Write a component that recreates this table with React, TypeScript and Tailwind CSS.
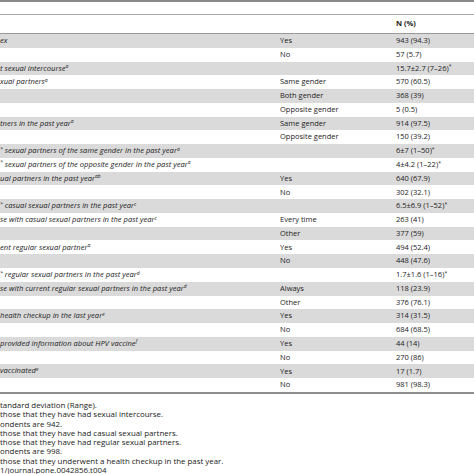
type Row = { label?: string; sup?: string; star?: boolean; cat?: string; val: string; valStar?: boolean };

const rows: Row[] = [
  { label: 'ex', cat: 'Yes', val: '943 (94.3)' },
  { cat: 'No', val: '57 (5.7)' },
  { label: 't sexual intercourse', sup: 'a', val: '15.7±2.7 (7–26)', valStar: true },
  { label: 'xual partners', sup: 'a', cat: 'Same gender', val: '570 (60.5)' },
  { cat: 'Both gender', val: '368 (39)' },
  { cat: 'Opposite gender', val: '5 (0.5)' },
  { label: 'tners in the past year', sup: 'a', cat: 'Same gender', val: '914 (97.5)' },
  { cat: 'Opposite gender', val: '150 (39.2)' },
  { label: ' sexual partners of the same gender in the past year', star: true, sup: 'a', val: '6±7 (1–50)', valStar: true },
  { label: ' sexual partners of the opposite gender in the past year', star: true, sup: 'a', val: '4±4.2 (1–22)', valStar: true },
  { label: 'ual partners in the past year', sup: 'ab', cat: 'Yes', val: '640 (67.9)' },
  { cat: 'No', val: '302 (32.1)' },
  { label: ' casual sexual partners in the past year', star: true, sup: 'c', val: '6.5±6.9 (1–52)', valStar: true },
  { label: 'se with casual sexual partners in the past year', sup: 'c', cat: 'Every time', val: '263 (41)' },
  { cat: 'Other', val: '377 (59)' },
  { label: 'ent regular sexual partner', sup: 'a', cat: 'Yes', val: '494 (52.4)' },
  { cat: 'No', val: '448 (47.6)' },
  { label: ' regular sexual partners in the past year', star: true, sup: 'd', val: '1.7±1.6 (1–16)', valStar: true },
  { label: 'se with current regular sexual partners in the past year', sup: 'd', cat: 'Always', val: '118 (23.9)' },
  { cat: 'Other', val: '376 (76.1)' },
  { label: 'health checkup in the last year', sup: 'e', cat: 'Yes', val: '314 (31.5)' },
  { cat: 'No', val: '684 (68.5)' },
  { label: 'provided information about HPV vaccine', sup: 'f', cat: 'Yes', val: '44 (14)' },
  { cat: 'No', val: '270 (86)' },
  { label: 'vaccinated', sup: 'e', cat: 'Yes', val: '17 (1.7)' },
  { cat: 'No', val: '981 (98.3)' },
]

const notes = [
  'tandard deviation (Range).',
  'those that they have had sexual intercourse.',
  'ondents are 942.',
  'those that they have had casual sexual partners.',
  'those that they have had regular sexual partners.',
  'ondents are 998.',
  'those that they underwent a health checkup in the past year.',
  '1/journal.pone.0042856.t004',
]

export default function App() {
  return (
    <div className="w-[474px] h-[474px] overflow-hidden bg-white text-[#222] text-[7.5px] leading-none" style={{ fontFamily: '"Open Sans", "Liberation Sans", sans-serif' }}>
      {/* Top rule */}
      <div className="h-[2px] bg-[#8a8a8a]" />
      <div className="h-[12px]" />
      <div className="h-px bg-[#a8a8a8]" />

      {/* Header */}
      <div className="flex h-[18px] items-center">
        <div className="w-[396px] shrink-0" />
        <div className="font-bold">N (%)</div>
      </div>
      <div className="h-px bg-[#9a9a9a]" />

      {/* Body */}
      <div>
        {rows.map((r, i) => (
          <div key={i} className={`flex h-[13.77px] items-center ${i % 2 === 0 ? 'bg-[#dadada]' : 'bg-white'}`}>
            <div className="w-[280px] shrink-0 whitespace-nowrap italic text-[7.6px]">
              {r.star && <sup className="text-[5px]">*</sup>}
              {r.label}
              {r.sup && <sup className="text-[5px]">{r.sup}</sup>}
            </div>
            <div className="w-[116px] shrink-0 whitespace-nowrap">{r.cat}</div>
            <div className="whitespace-nowrap">
              {r.val}
              {r.valStar && <sup className="text-[5px]">*</sup>}
            </div>
          </div>
        ))}
      </div>
      <div className="h-[2px] bg-[#8e8e8e]" />

      {/* Footnotes */}
      <div className="pt-[7px] text-[7.9px]">
        {notes.map((n, i) => (
          <div key={i} className="h-[9.3px] whitespace-nowrap leading-[9.3px]">{n}</div>
        ))}
      </div>
    </div>
  )
}
